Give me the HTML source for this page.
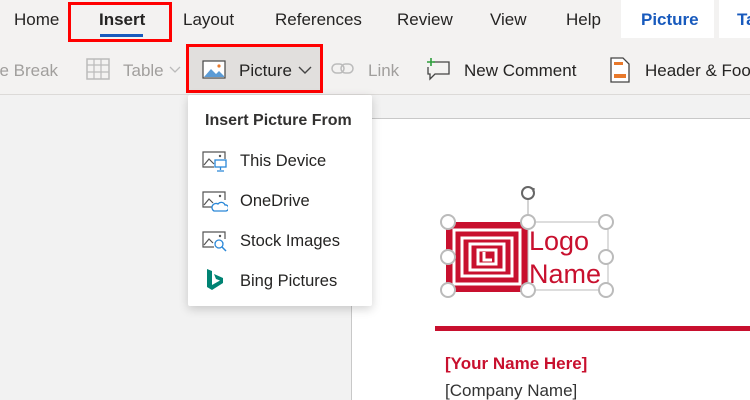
<!DOCTYPE html>
<html style="width:750px;height:400px;overflow:hidden"><head><meta charset="utf-8"><style>
body{margin:0;width:750px;height:400px;overflow:hidden;background:#f2f2f2;font-family:"Segoe UI","Liberation Sans",sans-serif;position:relative;color:#252423}
.a{position:absolute;white-space:nowrap}
.tab{font-size:17px;top:10px}
.tb{font-size:17px;top:61px}
</style></head><body>
<div class="a" style="left:0;top:0;width:750px;height:94px;background:#f3f2f1;border-bottom:1px solid #dcdad8"></div>
<div class="a tab" style="left:14px">Home</div>
<div class="a tab" style="left:99px;font-weight:bold">Insert</div>
<div class="a" style="left:100px;top:34px;width:43px;height:3px;background:#185abd"></div>
<div class="a" style="left:68px;top:2px;width:104px;height:40px;border:3px solid #f00;box-sizing:border-box"></div>
<div class="a tab" style="left:183px">Layout</div>
<div class="a tab" style="left:275px">References</div>
<div class="a tab" style="left:397px">Review</div>
<div class="a tab" style="left:490px">View</div>
<div class="a tab" style="left:566px">Help</div>
<div class="a" style="left:621px;top:0;width:93px;height:38px;background:#fff"></div>
<div class="a tab" style="left:641px;color:#185abd;font-weight:bold">Picture</div>
<div class="a" style="left:719px;top:0;width:40px;height:38px;background:#fff"></div>
<div class="a tab" style="left:737px;color:#185abd;font-weight:bold">Table</div>

<div class="a tb" style="left:-10px;color:#a19f9d">ge Break</div>
<svg class="a" style="left:86px;top:58px" width="24" height="22"><rect x="1" y="1" width="22" height="20" fill="none" stroke="#bbb" stroke-width="1.5"/><path d="M1 7H23M1 14H23M8 1V21M15 1V21" stroke="#bbb" stroke-width="1.2"/></svg>
<div class="a tb" style="left:123px;color:#a19f9d">Table</div>
<svg class="a" style="left:169px;top:66px" width="12" height="8"><path d="M1 1L6 6L11 1" fill="none" stroke="#bbb" stroke-width="1.3"/></svg>
<div class="a" style="left:186px;top:44px;width:137px;height:49px;background:#e1dfdd"></div>
<div class="a" style="left:186px;top:44px;width:137px;height:49px;border:3px solid #f00;box-sizing:border-box"></div>
<svg class="a" style="left:202px;top:60px" width="24" height="19"><rect x="1" y="1" width="22" height="17" fill="#fff" stroke="#444" stroke-width="1.2"/><path d="M2 17L9 9L14 14L17 11L22 16V17Z" fill="#5b9bd5"/><circle cx="17" cy="6" r="1.6" fill="#e8792b"/></svg>
<div class="a tb" style="left:239px">Picture</div>
<svg class="a" style="left:298px;top:66px" width="14" height="8"><path d="M1 1L7 7L13 1" fill="none" stroke="#444" stroke-width="1.4"/></svg>
<svg class="a" style="left:331px;top:61px" width="24" height="16"><rect x="1" y="3" width="12" height="9" rx="4.5" fill="none" stroke="#bbb" stroke-width="1.5"/><rect x="10" y="3" width="12" height="9" rx="4.5" fill="none" stroke="#bbb" stroke-width="1.5"/></svg>
<div class="a tb" style="left:368px;color:#a19f9d">Link</div>
<svg class="a" style="left:425px;top:57px" width="26" height="24"><path d="M8 5H24V17H10L5 22V17H3V10" fill="none" stroke="#444" stroke-width="1.3"/><path d="M6 1V9M2 5H10" stroke="#2e9e3c" stroke-width="1.6"/></svg>
<div class="a tb" style="left:464px">New Comment</div>
<svg class="a" style="left:610px;top:57px" width="20" height="26"><path d="M1 1H13L19 7V25H1Z" fill="#fff" stroke="#444" stroke-width="1.3"/><rect x="4" y="5" width="9" height="3" fill="#e8792b"/><rect x="4" y="17" width="12" height="4" fill="#e8792b"/></svg>
<div class="a tb" style="left:645px">Header &amp; Footer</div>

<div class="a" style="left:351px;top:118px;width:420px;height:282px;background:#fff;border-left:1px solid #c8c8c8;border-top:1px solid #c8c8c8"></div>

<div class="a" style="left:188px;top:95px;width:184px;height:211px;background:#fff;border-radius:2px;box-shadow:0 3px 10px rgba(0,0,0,.18)"></div>
<div class="a" style="left:205px;top:112px;font-size:16px;font-weight:bold;color:#323130">Insert Picture From</div>
<div class="a" style="left:240px;top:152px;font-size:16.5px">This Device</div>
<div class="a" style="left:240px;top:192px;font-size:16.5px">OneDrive</div>
<div class="a" style="left:240px;top:232px;font-size:16.5px">Stock Images</div>
<div class="a" style="left:240px;top:272px;font-size:16.5px">Bing Pictures</div>
<svg class="a" style="left:202px;top:151px" width="26" height="22"><path d="M12 16H1V1H23V8" fill="none" stroke="#555" stroke-width="1.2"/><path d="M2 14L7 8L12 13" fill="none" stroke="#555" stroke-width="1.2"/><circle cx="18" cy="5" r="1.2" fill="#555"/><rect x="13" y="9" width="11" height="7" fill="#fff" stroke="#2b88d8" stroke-width="1.3"/><path d="M18.5 16V19M15 20H22" stroke="#2b88d8" stroke-width="1.3"/></svg>
<svg class="a" style="left:202px;top:191px" width="26" height="22"><path d="M10 16H1V1H23V9" fill="none" stroke="#555" stroke-width="1.2"/><path d="M2 14L7 8L11 12" fill="none" stroke="#555" stroke-width="1.2"/><circle cx="18" cy="5" r="1.2" fill="#555"/><path d="M12 20H24A3 3 0 0 0 23 14A4 4 0 0 0 16 13A3 3 0 0 0 12 20Z" fill="#fff" stroke="#2b88d8" stroke-width="1.3"/></svg>
<svg class="a" style="left:202px;top:231px" width="26" height="22"><path d="M12 16H1V1H23V8" fill="none" stroke="#555" stroke-width="1.2"/><path d="M2 14L7 8L11 12" fill="none" stroke="#555" stroke-width="1.2"/><circle cx="18" cy="5" r="1.2" fill="#555"/><circle cx="17" cy="13" r="4" fill="#fff" stroke="#2b88d8" stroke-width="1.3"/><path d="M20 16L24 20" stroke="#2b88d8" stroke-width="1.5"/></svg>
<svg class="a" style="left:205px;top:268px" width="20" height="26"><path d="M2 1L7 3V17L15 12.5L11 11L9 6L18 10V15L7 22L2 19Z" fill="#008373"/></svg>

<svg class="a" style="left:436px;top:182px" width="180" height="120">
<circle cx="92" cy="11" r="6" fill="none" stroke="#666" stroke-width="2"/><path d="M95 6l3 1-1 3" fill="none" stroke="#666" stroke-width="1.5"/>
<path d="M92 18V40" stroke="#aaa"/>
<rect x="10" y="40" width="82" height="70" fill="#c8102e"/>
<path d="M18 48H84V102H18Z M26 56H76V94H26Z M34 62H68V88H34Z M42 68H60V82H42Z M48 70V78H56" fill="none" stroke="#fff" stroke-width="3"/>
<rect x="92" y="40" width="80" height="68" fill="none" stroke="#bbb"/>
<text x="93" y="68" font-family="Liberation Sans,sans-serif" font-size="27" fill="#c8102e">Logo</text>
<text x="93" y="101" font-family="Liberation Sans,sans-serif" font-size="27" fill="#c8102e">Name</text>
<g fill="#fff" stroke="#bbb" stroke-width="2"><circle cx="12" cy="40" r="7"/><circle cx="92" cy="40" r="7"/><circle cx="170" cy="40" r="7"/><circle cx="12" cy="75" r="7"/><circle cx="170" cy="75" r="7"/><circle cx="12" cy="108" r="7"/><circle cx="92" cy="108" r="7"/><circle cx="170" cy="108" r="7"/></g>
</svg>
<div class="a" style="left:435px;top:326px;width:320px;height:5px;background:#c8102e"></div>
<div class="a" style="left:445px;top:354px;font-family:'Liberation Sans',sans-serif;font-size:17px;font-weight:bold;color:#c8102e">[Your Name Here]</div>
<div class="a" style="left:445px;top:381px;font-family:'Liberation Sans',sans-serif;font-size:17px;color:#333">[Company Name]</div>
</body></html>
